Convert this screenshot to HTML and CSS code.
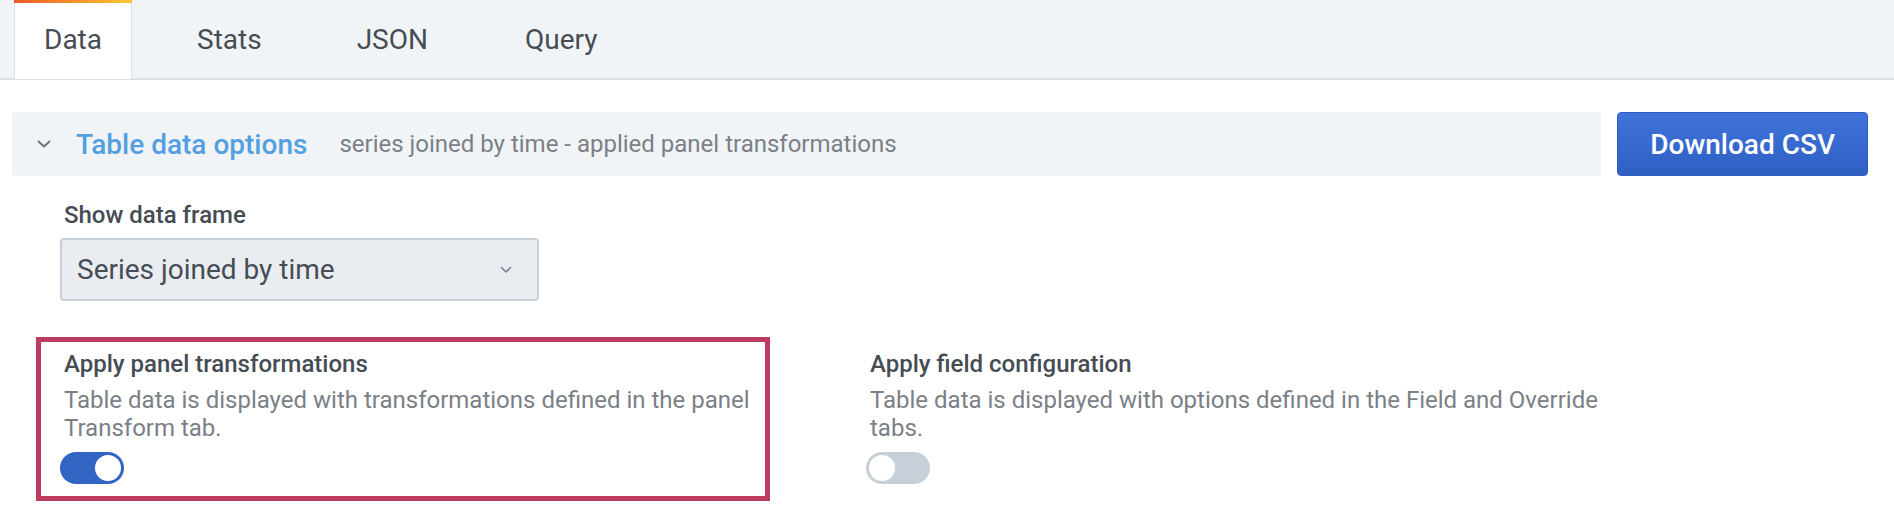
FILE: index.html
```html
<!DOCTYPE html>
<html lang="en">
<head>
<meta charset="utf-8">
<title>Inspect data</title>
<link rel="stylesheet" href="styles.css">
</head>
<body>
  <nav class="tabs">
    <div class="tab tab-active">Data</div>
    <div class="tab">Stats</div>
    <div class="tab">JSON</div>
    <div class="tab">Query</div>
  </nav>

  <main class="content">
    <div class="toolbar">
      <div class="row-header">
        <svg class="row-chevron" width="14" height="8" viewBox="0 0 14 8" aria-hidden="true">
          <path d="M1.5 1.5l5.5 5 5.5-5" fill="none" stroke="#6e737a" stroke-width="2" stroke-linecap="round" stroke-linejoin="round"/>
        </svg>
        <span class="row-title">Table data options</span>
        <span class="row-desc">series joined by time - applied panel transformations</span>
      </div>
      <button class="btn-primary" type="button">Download CSV</button>
    </div>

    <div class="options">
      <div class="field">
        <div class="label">Show data frame</div>
        <div class="select">
          <span class="select-value">Series joined by time</span>
          <svg class="select-chevron" width="12" height="8" viewBox="0 0 12 8" aria-hidden="true">
            <path d="M1.5 1.5l4.5 4.5 4.5-4.5" fill="none" stroke="#7b8087" stroke-width="1.6" stroke-linecap="round" stroke-linejoin="round"/>
          </svg>
        </div>
      </div>

      <div class="switch-row">
        <div class="field switch-field">
          <div class="highlight"></div>
          <div class="label">Apply panel transformations</div>
          <div class="desc">Table data is displayed with transformations defined in the panel Transform tab.</div>
          <div class="toggle toggle-on"><span class="knob"></span></div>
        </div>
        <div class="field switch-field">
          <div class="label">Apply field configuration</div>
          <div class="desc">Table data is displayed with options defined in the Field and Override tabs.</div>
          <div class="toggle"><span class="knob"></span></div>
        </div>
      </div>
    </div>
  </main>
</body>
</html>
```
FILE: styles.css
```css
* { box-sizing: border-box; }

html, body {
  margin: 0;
  padding: 0;
  background: #ffffff;
  font-family: Roboto, "Liberation Sans", Arial, sans-serif;
  color: #464c54;
}

body {
  min-height: 100vh;
}

/* ---------- tabs ---------- */
.tabs {
  display: flex;
  gap: 35px;
  height: 80px;
  padding-left: 14px;
  background: #f1f4f7;
  border-bottom: 2px solid #dce0e5;
}

.tab {
  position: relative;
  display: flex;
  align-items: center;
  height: 80px;
  padding: 0 29px;
  border: 1px solid transparent;
  border-top: 0;
  font-size: 28px;
  font-weight: 400;
  color: #464c54;
}

.tab:last-child {
  margin-left: 2px;
}

.tab-active {
  background: #ffffff;
  border-color: #dce0e5;
}

.tab-active::before {
  content: "";
  position: absolute;
  left: -1px;
  right: -1px;
  top: 0;
  height: 3px;
  background: linear-gradient(90deg, #eb5a2a 0%, #f38f2c 50%, #fbc835 100%);
}

/* ---------- content ---------- */
.content {
  padding: 32px 26px 32px 12px;
}

.toolbar {
  display: flex;
  gap: 16px;
  height: 64px;
}

.row-header {
  flex: 1;
  display: flex;
  align-items: center;
  padding-left: 25px;
  background: #f1f4f7;
  border-radius: 4px;
}

.row-chevron {
  flex: none;
  margin-right: 25px;
}

.row-title {
  font-size: 28px;
  font-weight: 500;
  color: #52a0e1;
}

.row-desc {
  margin-left: 32px;
  font-size: 24px;
  color: #7b8087;
}

.btn-primary {
  flex: none;
  height: 64px;
  padding: 0 32px;
  border: 1px solid #2f5ec0;
  border-radius: 4px;
  background: linear-gradient(180deg, #3f74da 0%, #2f5fc3 100%);
  color: #ffffff;
  font-family: inherit;
  font-size: 28px;
  font-weight: 500;
}

/* ---------- options ---------- */
.options {
  padding-left: 48px;
  margin-top: 25px;
}

.label {
  padding-left: 4px;
  font-size: 24px;
  line-height: 28px;
  font-weight: 500;
  color: #464c54;
}

.field > .label + .select {
  margin-top: 9px;
}

.select {
  display: flex;
  align-items: center;
  justify-content: space-between;
  width: 479px;
  height: 63px;
  padding: 0 25px 0 15px;
  background: #e9edf2;
  border: 2px solid #c7d0d9;
  border-radius: 4px;
}

.select-value {
  font-size: 28px;
  color: #464c54;
}

.switch-row {
  display: flex;
  gap: 40px;
  margin-top: 49px;
}

.switch-field {
  position: relative;
  width: 766px;
}

.desc {
  margin-top: 8px;
  padding-left: 4px;
  font-size: 24px;
  line-height: 28px;
  color: #7b8087;
}

.highlight {
  position: absolute;
  left: -24px;
  top: -13px;
  width: 734px;
  height: 164px;
  border: 5px solid #be3c5f;
  pointer-events: none;
}

/* ---------- toggle ---------- */
.toggle {
  position: relative;
  width: 64px;
  height: 32px;
  margin-top: 10px;
  border-radius: 16px;
  background: #c7d0d9;
}

.knob {
  position: absolute;
  top: 3px;
  left: 3px;
  width: 26px;
  height: 26px;
  border-radius: 50%;
  background: #ffffff;
}

.toggle-on {
  background: #3164c3;
}

.toggle-on .knob {
  left: auto;
  right: 3px;
}
```
